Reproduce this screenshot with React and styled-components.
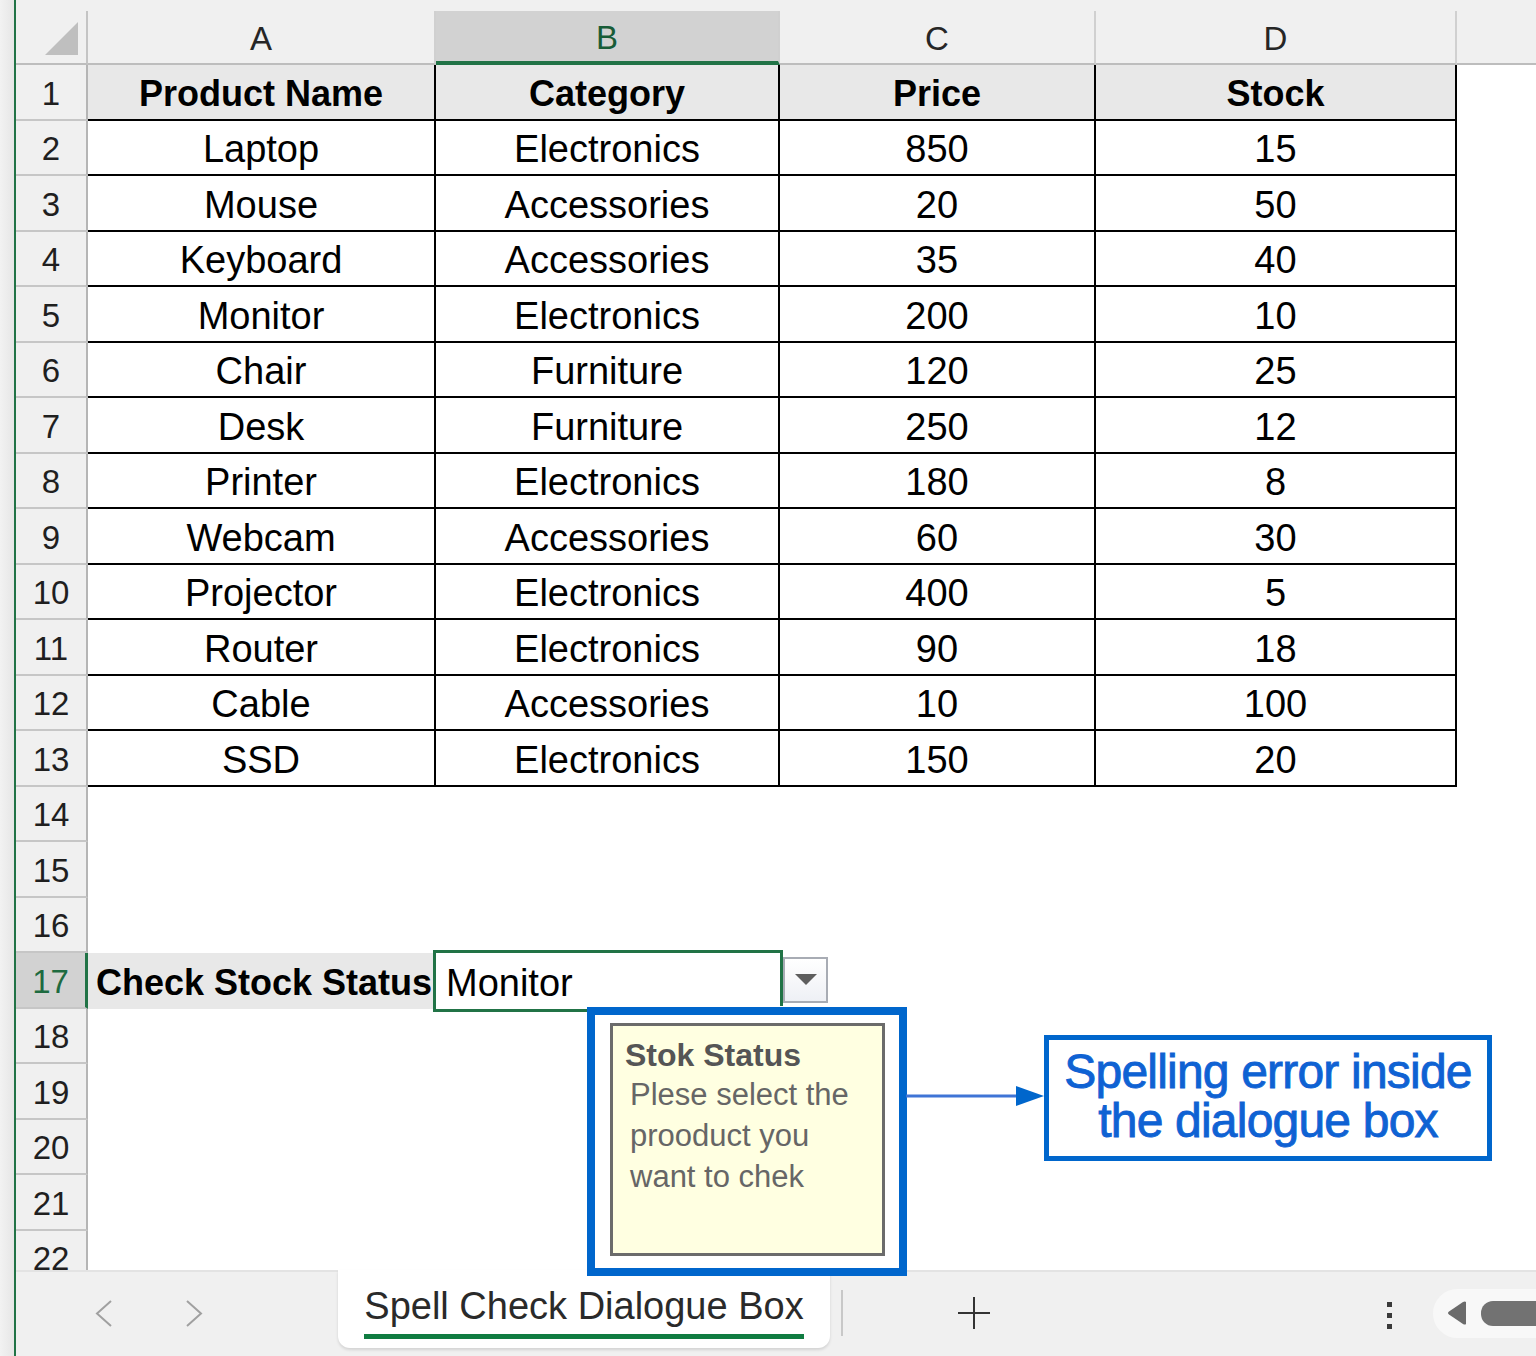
import React from 'react';
import styled, {createGlobalStyle, css} from 'styled-components';

const sans = '"Liberation Sans", Arial, sans-serif';

const GlobalStyle = createGlobalStyle`
  html, body {
    margin: 0;
    padding: 0;
    background: #f0f0f0;
    overflow: hidden;
  }
  * {
    box-sizing: border-box;
  }
`;

const Page = styled.div`
  position: relative;
  width: 1536px;
  height: 1356px;
  display: flex;
  background: #f0f0f0;
  font-family: ${sans};
  overflow: hidden;
`;

const EdgeStrip = styled.div`
  width: 14px;
  flex: none;
  background: linear-gradient(to right, #f2f2f2 0, #e6e6e6 100%);
`;

const Workbook = styled.div`
  flex: 1;
  display: flex;
  flex-direction: column;
  border-left: 2px solid #217346;
  min-width: 0;
`;

const SheetArea = styled.div`
  height: 1270px;
  flex: none;
  overflow: hidden;
  background: #ffffff;
`;

const TopGap = styled.div`
  height: 11px;
  background: #f0f0f0;
`;

const Grid = styled.div`
  display: grid;
  grid-template-columns: 72px 348px 344px 316px 361px 1fr;
  grid-template-rows: 54px;
  grid-auto-rows: 55.5px;
`;

const headerBase = css`
  display: flex;
  align-items: center;
  justify-content: center;
  padding-top: 4px;
  font-size: 33px;
  color: #262626;
  background: ${({active}) => (active ? '#d2d2d2' : '#f0f0f0')};
`;

const Corner = styled.div`
  ${headerBase};
  align-items: flex-end;
  justify-content: flex-end;
  padding: 0 8px 8px 0;
  border-right: 2px solid #c4c4c4;
  border-bottom: 2px solid #bdbdbd;
`;

const ColHead = styled.div`
  ${headerBase};
  color: ${({active}) => (active ? '#185c37' : '#262626')};
  border-right: ${({last}) => (last ? 'none' : '2px solid #d0d0d0')};
  border-bottom: ${({active}) => (active ? '4px solid #217346' : '2px solid #bdbdbd')};
`;

const RowHead = styled.div`
  ${headerBase};
  color: ${({active}) => (active ? '#1e6b40' : '#1f1f1f')};
  border-right: ${({active}) => (active ? '3px solid #217346' : '2px solid #b5b5b5')};
  border-bottom: 2px solid #c6c6c6;
`;

const Cell = styled.div`
  display: flex;
  align-items: center;
  justify-content: ${({align}) => (align === 'left' ? 'flex-start' : 'center')};
  padding-top: 5px;
  padding-left: ${({align}) => (align === 'left' ? '8px' : '0')};
  font-size: ${({bold}) => (bold ? '36px' : '38px')};
  font-weight: ${({bold}) => (bold ? 700 : 400)};
  color: #000;
  white-space: nowrap;
  background: ${({shade}) => (shade ? '#e8e8e8' : '#ffffff')};
  ${({boxed}) => boxed && css`
    border-right: 2px solid #000;
    border-bottom: 2px solid #000;
  `}
`;

const SelectedCell = styled(Cell)`
  position: relative;
  z-index: 1;
  padding-left: 10px;
  outline: 3px solid #217346;
`;

const FillHandle = styled.span`
  position: absolute;
  right: -7px;
  bottom: -7px;
  width: 10px;
  height: 10px;
  background: #217346;
  border: 1px solid #ffffff;
`;

const DropButton = styled.div`
  position: absolute;
  left: 783px;
  top: 957px;
  width: 45px;
  height: 46px;
  display: flex;
  align-items: center;
  justify-content: center;
  border: 2px solid #a8acb4;
  background: linear-gradient(to bottom, #ffffff 0%, #eef0f5 100%);
  z-index: 2;
`;

const Tooltip = styled.div`
  position: absolute;
  left: 587px;
  top: 1007px;
  width: 320px;
  height: 269px;
  padding: 8px 14px 12px 15px;
  border: 8px solid #0066cc;
  background: #ffffff;
  z-index: 3;
`;

const TipBody = styled.div`
  height: 100%;
  padding: 10px 8px 0 12px;
  border: 3px solid #6b6b6b;
  background: #ffffe1;
`;

const TipTitle = styled.div`
  font-size: 32px;
  line-height: 38px;
  font-weight: 700;
  color: #555555;
`;

const TipText = styled.div`
  padding-left: 5px;
  font-size: 31px;
  line-height: 41px;
  color: #666666;
`;

const Arrow = styled.svg`
  position: absolute;
  left: 906px;
  top: 1085px;
  z-index: 3;
`;

const Callout = styled.div`
  position: absolute;
  left: 1044px;
  top: 1035px;
  width: 448px;
  height: 126px;
  padding-top: 7px;
  border: 5px solid #0066cc;
  background: #ffffff;
  text-align: center;
  font-size: 48px;
  line-height: 49px;
  letter-spacing: -0.8px;
  color: #0f62d3;
  -webkit-text-stroke: 0.9px #0f62d3;
  z-index: 3;
`;

const TabBar = styled.div`
  flex: 1;
  display: flex;
  align-items: center;
  background: #f0f0f0;
  box-shadow: inset 0 2px 0 #e3e3e3;
`;

const NavButton = styled.div`
  width: 90px;
  height: 40px;
  display: flex;
  align-items: center;
  justify-content: center;
  margin-left: ${({first}) => (first ? '43px' : '0')};
`;

const SheetTab = styled.div`
  align-self: flex-start;
  width: 492px;
  height: 78px;
  margin-left: 99px;
  padding-top: 15px;
  display: flex;
  justify-content: center;
  background: #ffffff;
  border-radius: 0 0 12px 12px;
  box-shadow: 0 2px 3px rgba(0, 0, 0, 0.12);
`;

const TabLabel = styled.span`
  font-size: 38px;
  line-height: 42px;
  padding-bottom: 7px;
  color: #2a2a2a;
  border-bottom: 5px solid #107c41;
  height: 54px;
`;

const Divider = styled.div`
  width: 2px;
  height: 46px;
  margin-left: 11px;
  background: #c8c8c8;
`;

const PlusButton = styled.div`
  margin-left: 114px;
  width: 34px;
  height: 34px;
  display: flex;
`;

const Spacer = styled.div`
  flex: 1;
`;

const MoreDots = styled.div`
  display: flex;
  flex-direction: column;
  gap: 6px;
  margin-top: 4px;
  margin-right: 41px;

  span {
    width: 5px;
    height: 5px;
    background: #3a3a3a;
  }
`;

const ScrollPill = styled.div`
  width: 103px;
  height: 49px;
  display: flex;
  align-items: center;
  padding-left: 14px;
  gap: 14px;
  background: #f8f8f8;
  border-radius: 25px 0 0 25px;
`;

const ScrollThumb = styled.div`
  flex: 1;
  height: 25px;
  background: #727272;
  border-radius: 12px 0 0 12px;
`;

const products = [
  ['Laptop', 'Electronics', 850, 15],
  ['Mouse', 'Accessories', 20, 50],
  ['Keyboard', 'Accessories', 35, 40],
  ['Monitor', 'Electronics', 200, 10],
  ['Chair', 'Furniture', 120, 25],
  ['Desk', 'Furniture', 250, 12],
  ['Printer', 'Electronics', 180, 8],
  ['Webcam', 'Accessories', 60, 30],
  ['Projector', 'Electronics', 400, 5],
  ['Router', 'Electronics', 90, 18],
  ['Cable', 'Accessories', 10, 100],
  ['SSD', 'Electronics', 150, 20],
];

const columns = ['A', 'B', 'C', 'D'];
const headings = ['Product Name', 'Category', 'Price', 'Stock'];

const Chevron = ({dir}) => (
  <svg width="20" height="27" viewBox="0 0 20 27">
    <polyline
      points={dir === 'left' ? '17,1 3,13.5 17,26' : '3,1 17,13.5 3,26'}
      fill="none"
      stroke="#a0a0a0"
      strokeWidth="2"
    />
  </svg>
);

const EmptyRow = ({n, active, children}) => (
  <>
    <RowHead active={active}>{n}</RowHead>
    {children || (
      <>
        <Cell/>
        <Cell/>
        <Cell/>
        <Cell/>
        <Cell/>
      </>
    )}
  </>
);

const App = () => {
  return (
    <Page>
      <GlobalStyle/>
      <EdgeStrip/>
      <Workbook>
        <SheetArea>
          <TopGap/>
          <Grid>
            <Corner>
              <svg width="33" height="33" viewBox="0 0 33 33">
                <polygon points="33,0 33,33 0,33" fill="#bfbfbf"/>
              </svg>
            </Corner>
            {columns.map((c) => (
              <ColHead key={c} active={c === 'B'}>{c}</ColHead>
            ))}
            <ColHead last/>

            <RowHead>1</RowHead>
            {headings.map((h) => (
              <Cell key={h} boxed bold shade>{h}</Cell>
            ))}
            <Cell/>

            {products.map((p, i) => (
              <React.Fragment key={p[0]}>
                <RowHead>{i + 2}</RowHead>
                {p.map((v, j) => (
                  <Cell key={j} boxed>{v}</Cell>
                ))}
                <Cell/>
              </React.Fragment>
            ))}

            <EmptyRow n={14}/>
            <EmptyRow n={15}/>
            <EmptyRow n={16}/>
            <EmptyRow n={17} active>
              <Cell bold shade align="left">Check Stock Status</Cell>
              <SelectedCell align="left">
                Monitor
                <FillHandle/>
              </SelectedCell>
              <Cell/>
              <Cell/>
              <Cell/>
            </EmptyRow>
            {[18, 19, 20, 21, 22].map((n) => (
              <EmptyRow key={n} n={n}/>
            ))}
          </Grid>
        </SheetArea>

        <TabBar>
          <NavButton first><Chevron dir="left"/></NavButton>
          <NavButton><Chevron dir="right"/></NavButton>
          <SheetTab>
            <TabLabel>Spell Check Dialogue Box</TabLabel>
          </SheetTab>
          <Divider/>
          <PlusButton>
            <svg width="34" height="34" viewBox="0 0 34 34">
              <line x1="17" y1="1" x2="17" y2="33" stroke="#333" strokeWidth="2"/>
              <line x1="1" y1="17" x2="33" y2="17" stroke="#333" strokeWidth="2"/>
            </svg>
          </PlusButton>
          <Spacer/>
          <MoreDots>
            <span/>
            <span/>
            <span/>
          </MoreDots>
          <ScrollPill>
            <svg width="20" height="24" viewBox="0 0 20 24">
              <path d="M19 1 L19 23 Q18 24 16 23 L2 13.5 Q0 12 2 10.5 L16 1 Q18 0 19 1 Z" fill="#6b6b6b"/>
            </svg>
            <ScrollThumb/>
          </ScrollPill>
        </TabBar>
      </Workbook>

      <DropButton>
        <svg width="22" height="12" viewBox="0 0 22 12">
          <polygon points="0,0 22,0 11,11" fill="#5e5e5e"/>
        </svg>
      </DropButton>

      <Tooltip>
        <TipBody>
          <TipTitle>Stok Status</TipTitle>
          <TipText>Plese select the</TipText>
          <TipText>prooduct you</TipText>
          <TipText>want to chek</TipText>
        </TipBody>
      </Tooltip>

      <Arrow width="140" height="22" viewBox="0 0 140 22">
        <line x1="0" y1="11" x2="114" y2="11" stroke="#3f74d6" strokeWidth="3"/>
        <polygon points="110,1 138,11 110,21" fill="#0066cc"/>
      </Arrow>

      <Callout>
        Spelling error inside
        <br/>
        the dialogue box
      </Callout>
    </Page>
  );
};

export default App;
